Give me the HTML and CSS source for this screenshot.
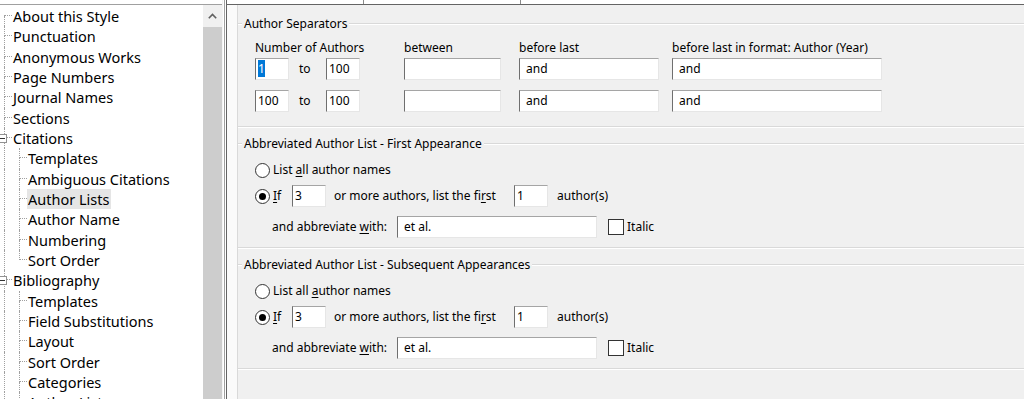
FILE: index.html
```html
<!DOCTYPE html>
<html>
<head>
<meta charset="utf-8">
<link rel="stylesheet" href="styles.css">
</head>
<body>
<div class="app">
  <aside class="side">
    <div class="topstrip"></div>
    <div class="side-body">
      <div class="tree">
        <div class="row root first"><div class="conn"><div class="t"></div><div class="b"></div></div><span class="label">About this Style</span></div>
        <div class="row root"><div class="conn"><div class="t"></div><div class="b"></div></div><span class="label">Punctuation</span></div>
        <div class="row root"><div class="conn"><div class="t"></div><div class="b"></div></div><span class="label">Anonymous Works</span></div>
        <div class="row root"><div class="conn"><div class="t"></div><div class="b"></div></div><span class="label">Page Numbers</span></div>
        <div class="row root"><div class="conn"><div class="t"></div><div class="b"></div></div><span class="label">Journal Names</span></div>
        <div class="row root"><div class="conn"><div class="t"></div><div class="b"></div></div><span class="label">Sections</span></div>
        <div class="row root"><div class="conn"><div class="t"></div><div class="b"></div><span class="expander"></span></div><span class="label">Citations</span></div>
        <div class="row child"><div class="guide"></div><div class="conn"><div class="t"></div><div class="b"></div></div><span class="label">Templates</span></div>
        <div class="row child"><div class="guide"></div><div class="conn"><div class="t"></div><div class="b"></div></div><span class="label">Ambiguous Citations</span></div>
        <div class="row child sel"><div class="guide"></div><div class="conn"><div class="t"></div><div class="b"></div></div><span class="label">Author Lists</span></div>
        <div class="row child"><div class="guide"></div><div class="conn"><div class="t"></div><div class="b"></div></div><span class="label">Author Name</span></div>
        <div class="row child"><div class="guide"></div><div class="conn"><div class="t"></div><div class="b"></div></div><span class="label">Numbering</span></div>
        <div class="row child last"><div class="guide"></div><div class="conn"><div class="t"></div><div class="b"></div></div><span class="label">Sort Order</span></div>
        <div class="row root"><div class="conn"><div class="t"></div><div class="b"></div><span class="expander"></span></div><span class="label">Bibliography</span></div>
        <div class="row child"><div class="guide"></div><div class="conn"><div class="t"></div><div class="b"></div></div><span class="label">Templates</span></div>
        <div class="row child"><div class="guide"></div><div class="conn"><div class="t"></div><div class="b"></div></div><span class="label">Field Substitutions</span></div>
        <div class="row child"><div class="guide"></div><div class="conn"><div class="t"></div><div class="b"></div></div><span class="label">Layout</span></div>
        <div class="row child"><div class="guide"></div><div class="conn"><div class="t"></div><div class="b"></div></div><span class="label">Sort Order</span></div>
        <div class="row child"><div class="guide"></div><div class="conn"><div class="t"></div><div class="b"></div></div><span class="label">Categories</span></div>
        <div class="row child"><div class="guide"></div><div class="conn"><div class="t"></div><div class="b"></div></div><span class="label">Author Lists</span></div>
      </div>
      <div class="scroll">
        <div class="sb-up">
          <svg width="9" height="6" viewBox="0 0 9 6"><polyline points="0.8,5.2 4.5,1.5 8.2,5.2" fill="none" stroke="#606060" stroke-width="1.6"/></svg>
        </div>
        <div class="sb-thumb"></div>
      </div>
    </div>
  </aside>
  <div class="splitter"></div>
  <main class="main">
    <div class="main-top"><span class="gap g1"></span><span class="tick"></span><span class="gap g2"></span><span class="tick"></span></div>
    <div class="main-body">
      <div class="page">
        <section class="group g-sep">
          <div class="gtitle">Author Separators</div>
          <div class="seprow head">
            <div class="c1">Number of Authors</div>
            <div class="c2">between</div>
            <div class="c3">before last</div>
            <div class="c4">before last in format: Author (Year)</div>
          </div>
          <div class="seprow data first">
            <div class="c1 pair"><div class="field num"><span class="hl">1</span></div><span class="to">to</span><div class="field num">100</div></div>
            <div class="c2 field txt"></div>
            <div class="c3 field txt">and</div>
            <div class="c4 field txt">and</div>
          </div>
          <div class="seprow data">
            <div class="c1 pair"><div class="field num">100</div><span class="to">to</span><div class="field num">100</div></div>
            <div class="c2 field txt"></div>
            <div class="c3 field txt">and</div>
            <div class="c4 field txt">and</div>
          </div>
        </section>

        <section class="group g-abbr">
          <div class="gtitle">Abbreviated Author List - First Appearance</div>
          <div class="opt-row r1"><span class="radio"></span><span class="rlabel">List <u>a</u>ll author names</span></div>
          <div class="opt-row r2">
            <span class="radio on"></span><span class="rlabel lbl-if"><u>I</u>f</span>
            <div class="field num w34">3</div>
            <span class="mid">or more authors, list the fi<u>r</u>st</span>
            <div class="field num w34">1</div>
            <span class="after">author(s)</span>
          </div>
          <div class="opt-row r3">
            <span class="abbr-lbl">and abbreviate <u>w</u>ith:</span>
            <div class="field txt w200">et al.</div>
            <span class="check"></span><span class="clabel">Italic</span>
          </div>
        </section>

        <section class="group g-abbr g-sub">
          <div class="gtitle">Abbreviated Author List - Subsequent Appearances</div>
          <div class="opt-row r1"><span class="radio"></span><span class="rlabel">List all <u>a</u>uthor names</span></div>
          <div class="opt-row r2">
            <span class="radio on"></span><span class="rlabel lbl-if"><u>I</u>f</span>
            <div class="field num w34">3</div>
            <span class="mid">or more authors, list the fi<u>r</u>st</span>
            <div class="field num w34">1</div>
            <span class="after">author(s)</span>
          </div>
          <div class="opt-row r3">
            <span class="abbr-lbl">and abbreviate <u>w</u>ith:</span>
            <div class="field txt w200">et al.</div>
            <span class="check"></span><span class="clabel">Italic</span>
          </div>
        </section>
      </div>
    </div>
  </main>
</div>
</body>
</html>
```

FILE: styles.css
```css
* { box-sizing: border-box; }
html, body { margin: 0; padding: 0; }
body {
  width: 1024px;
  height: 399px;
  overflow: hidden;
  background: #fff;
  color: #000;
  font-family: "Noto Sans", "Liberation Sans", sans-serif;
}
.app { display: flex; height: 399px; }

/* ---------- sidebar ---------- */
.side { width: 222px; flex: none; display: flex; flex-direction: column; }
.topstrip { height: 4px; flex: none; background: #fff; }
.side-body {
  flex: 1;
  min-height: 0;
  display: flex;
  border-top: 1px solid #a0a0a0;
  overflow: hidden;
}
.tree {
  width: 203px;
  flex: none;
  padding-top: 1px;
  font-size: 14.5px;
  overflow: hidden;
  background: #fff;
}
.row {
  display: flex;
  height: 20.33px;
  line-height: 20.33px;
  white-space: nowrap;
}
.guide {
  flex: none;
  width: 15px;
  margin-left: 4px;
  border-left: 1px dotted #a0a0a0;
}
.conn {
  flex: none;
  width: 8px;
  display: flex;
  flex-direction: column;
  position: relative;
}
.row.root .conn { margin-left: 4px; }
.conn .t {
  height: 10px;
  border-left: 1px dotted #a0a0a0;
  border-bottom: 1px dotted #a0a0a0;
}
.conn .b { flex: 1; border-left: 1px dotted #a0a0a0; }
.row.first .conn .t { border-left: none; }
.row.last .conn .b { border-left: none; }
.label { padding: 0 2px 0 1px; }
.row.sel .label { background: #e5e5e5; }
.expander {
  position: absolute;
  left: -6px;
  top: 6px;
  width: 9px;
  height: 9px;
  border: 1px solid #919191;
  background: #fff;
  display: flex;
  align-items: center;
  justify-content: center;
}
.expander::after { content: ""; width: 5px; height: 1px; background: #333; }

.scroll {
  width: 19px;
  flex: none;
  background: #f0f0f0;
  display: flex;
  flex-direction: column;
}
.sb-up { height: 22px; flex: none; display: flex; align-items: center; justify-content: center; }
.sb-up svg { display: block; }
.sb-thumb { flex: 1; background: #cdcdcd; }

.splitter {
  width: 5px;
  flex: none;
  background: linear-gradient(to right, #f4f4f4 0 1px, #fff 1px 2px, #a0a0a0 2px 3px, #fff 3px 4px, #646464 4px 5px);
}

/* ---------- main ---------- */
.main { flex: 1; min-width: 0; display: flex; flex-direction: column; }
.main-top { height: 4px; flex: none; display: flex; background: #fff; }
.main-top .g1 { width: 136px; }
.main-top .g2 { width: 156px; }
.main-top .tick { width: 1px; background: #8a8a8a; }
.main-body {
  flex: 1;
  min-height: 0;
  display: flex;
  border-top: 1px solid #646464;
  background: #fafafa;
  padding-left: 10px;
  overflow: hidden;
}
.page {
  flex: 1;
  min-width: 0;
  border-left: 1px solid #d9d9d9;
  background: #f0f0f0;
  font-size: 12px;
  line-height: 16px;
}

.group {
  border: 1px solid #d9d9d9;
  border-left: none;
  margin-right: -20px;
  box-shadow: inset 0 1px 0 #fff, 0 1px 0 #fff;
}
.g-sep { margin-top: 18px; padding-bottom: 14px; }
.g-abbr { margin-top: 16px; padding-bottom: 9px; }
.gtitle {
  width: max-content;
  margin: -8px 0 0 4px;
  padding: 0 2px;
  background: #f0f0f0;
  line-height: 16px;
}

.seprow { display: flex; margin-left: 17px; }
.seprow.head { height: 15px; line-height: 15px; margin-top: 8px; white-space: nowrap; }
.seprow.data { height: 22px; margin-top: 10px; }
.seprow.data.first { margin-top: 3px; }
.c1 { width: 105px; flex: none; }
.c2 { width: 97px; margin-left: 44px; flex: none; }
.c3 { width: 140px; margin-left: 18px; flex: none; }
.c4 { width: 210px; margin-left: 13px; flex: none; }
.pair { display: flex; }
.pair .field { width: 34px; }
.to { width: 37px; padding-left: 10px; line-height: 22px; }

.field {
  height: 22px;
  flex: none;
  background: #fff;
  border-top: 1px solid #a5a5a5;
  border-left: 1px solid #6f6f6f;
  border-right: 1px solid #e6e6e6;
  border-bottom: 1px solid #e6e6e6;
  line-height: 20px;
  white-space: nowrap;
}
.field.num { padding-left: 2px; }
.field.txt { padding-left: 6px; }
.hl { background: #0078d7; color: #fff; }
.w34 { width: 34px; }
.w200 { width: 200px; }

.opt-row { display: flex; align-items: center; margin-left: 17px; white-space: nowrap; }
.opt-row.r1 { height: 16px; margin-top: 10px; }
.opt-row.r2 { height: 22px; margin-top: 7px; }
.opt-row.r3 { height: 22px; margin-top: 9px; padding-left: 17px; }
.radio {
  width: 15px;
  height: 15px;
  flex: none;
  border: 1px solid #333;
  border-radius: 50%;
  background: #fff;
  display: flex;
  align-items: center;
  justify-content: center;
}
.radio.on::after { content: ""; width: 7px; height: 7px; border-radius: 50%; background: #000; }
.rlabel { margin-left: 3px; }
.lbl-if { width: 19px; flex: none; }
.mid { margin-left: 8px; width: 180px; flex: none; }
.after { margin-left: 9px; }
.abbr-lbl { width: 125px; flex: none; }
.check {
  width: 16px;
  height: 16px;
  flex: none;
  margin-left: 11px;
  border: 1px solid #333;
  background: #fff;
}
.clabel { margin-left: 3px; }
u { text-decoration-thickness: 1px; text-underline-offset: 2px; }
```
